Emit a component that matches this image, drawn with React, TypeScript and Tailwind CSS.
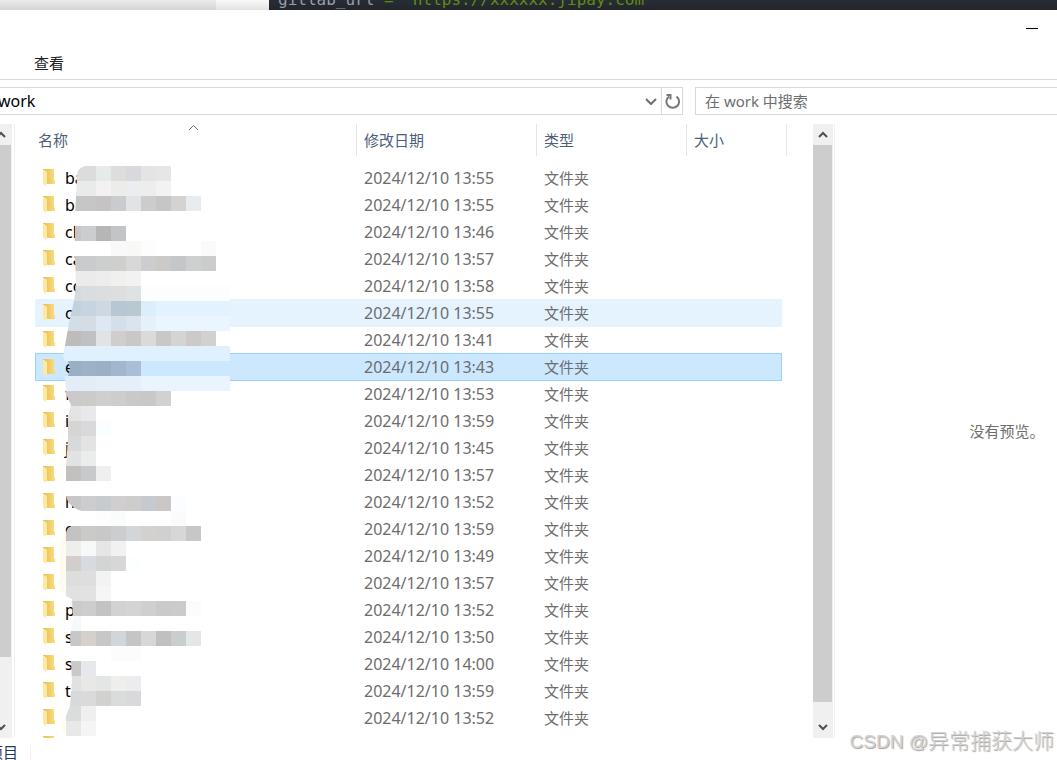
import React from 'react';
import clsx from 'clsx';

interface FolderProps {
  name: string;
  time: string;
  state?: 'hover' | 'selected';
}

const folders: FolderProps[] = [
  { name: 'ba', time: '13:55' },
  { name: 'br', time: '13:55' },
  { name: 'cl', time: '13:46' },
  { name: 'ca', time: '13:57' },
  { name: 'co', time: '13:58' },
  { name: 'c', time: '13:55', state: 'hover' },
  { name: '', time: '13:41' },
  { name: 'e', time: '13:43', state: 'selected' },
  { name: 'f', time: '13:53' },
  { name: 'i', time: '13:59' },
  { name: 'j', time: '13:45' },
  { name: '', time: '13:57' },
  { name: 'h', time: '13:52' },
  { name: 'o', time: '13:59' },
  { name: '', time: '13:49' },
  { name: '', time: '13:57' },
  { name: 'p', time: '13:52' },
  { name: 's', time: '13:50' },
  { name: 's', time: '14:00' },
  { name: 't', time: '13:59' },
  { name: '', time: '13:52' },
];

// One entry per 15px line, one colour per 15px cell, '-' leaves the cell empty
const mosaic = [
  'dcdcdc dcdcdc e7eaea dedddb d7d9dc e4e4e2 e6e6e6',
  'e9ebea e9ebea f2f2f2 ececeb ebedf0 ededed f2f2f2',
  'c6c5c5 c7c6c7 c5c3c4 cacbce e2e3e4 cccccc c7c6c7 d4d3d2 e9ecee',
  '',
  'c6c7c9 cbcdcf b6b6b6 c2c5c6',
  '- - - faf9f9 f8f8f7 fdfdfd - - - fafafa',
  'cbcaca c9cbcd cdcfce cfcfcd d8d8d9 cdcdcf cccac9 c5c6ca cecfd1 cccccc',
  'ebebeb ebebeb ededed f0f0ee f2f2f2',
  'd6dbdf d8dde0 dcdddf dededf dfe2e2 fcfdff fcfdff fcfdff fcfdff fcfdff fcfdff',
  'c4d0dc c8d3e0 ced8e0 b8c7d3 bac8d1 dcedfb e3f2ff e3f2ff e3f2ff e3f2ff e3f2ff',
  'd3dde7 d4dde6 dde8f2 d4dfe9 dbe4ed e6f0fa eaf5ff eaf5ff eaf5ff eaf5ff eaf5ff',
  'bebbba c0c1c5 e0e4e4 d0cdcb cac7c7 dadada c8c8c9 d3d5d5 cdc9c8 d1d1d1 ffffff',
  'dff0ff dff0ff dff0ff dff0ff dff0ff dff0ff dff0ff dff0ff dff0ff dff0ff dff0ff',
  '9aafc4 9db2c7 9bb0c5 a2b7cd a9bfd8',
  'e2edf8 e2edf8 e4effa e4effa e4effa e9f4ff e9f4ff e9f4ff e9f4ff e9f4ff e9f4ff',
  'cacaca cbcbca cfcfce cdcdcc c9c9c9 c8c8c8 d1d1d1',
  'e5e4e3 e8e9ea',
  'd6d5d3 d9d9db fafeff',
  'd8d9da e3e3e3',
  'e1e3e3 eaedec',
  'c2c1c0 c8c9cb efefef',
  '',
  'c8c7c6 cdcdcf c6cbcf d1cecf cdcdcb c6cace cac7c6 fbfdff',
  '- - fdfdfd f9fcfb - - - fbfbfb',
  'c3c3c4 cbcac6 c8c8c9 cccdd0 d3d6d9 d3d0ce d0d0d0 d5d8d6 c7c7ca',
  'eeeeed f6f9f8 e7e6e6 f1f1f1',
  'd2cecc d7dadf d2d5d3 d8d7d5 fcfeff',
  'dddddc dededf f3f3f3',
  'e1e1e1 e2e2e2 f6f6f6',
  'cacaca cdcdcb c3c3c3 d2d2d2 d4d4d2 cfcfcf cacaca cbcbcb fafcfd',
  'f7f8f9',
  'c7c7c9 d4d0ca c9c7c5 d1d6d9 c5c5c5 d7d7d5 c0c0c0 c9cdd0 e4e7e6',
  '- - - fcfcfc fcfcfc',
  'cbc9c8 e6e8eb',
  'e0e2e1 e8e8e8 e3e6e4 eeeeec ececee',
  'd8d9d9 dadada d1d1d0 dadcdb d9d9db',
  'dbdcde efefef',
  'e8e8e8 f5f5f5',
];

const Mosaic = () => (
  <svg
    className="pointer-events-none absolute left-[45px] top-[42px]"
    width="180"
    height="570"
    shapeRendering="crispEdges"
    aria-hidden="true"
  >
    <defs>
      <clipPath id="brush">
        <path d="M25 0Q17 2 17 10L16 30 15 60 15 92 16 120 14 135 9 157 6 174 3 190 5 195H8L10 203 8 210H5L6 228 11 239 8 250 8 272 6 300 6 330Q8 341 22 345L16 358Q6 361 6 368V430L12 433 13 452 10 470 11 495 12 515 10 540 6 550V570H170V0Z" />
      </clipPath>
    </defs>
    <path d="M4 368Q-4 385-4 410L0 424 6 428V364Z" fill="#fffbee" />
    <path d="M6 548Q1 556 2 562L6 570Z" fill="#fffbee" />
    <g clipPath="url(#brush)">
      {mosaic.map((line, row) =>
        line
          .split(' ')
          .map((color, col) =>
            color.length === 6 ? (
              <rect
                key={`${row}-${col}`}
                x={col === 0 ? 0 : 6 + col * 15}
                y={row * 15}
                width={col === 0 ? 21 : 15}
                height="15"
                fill={`#${color}`}
              />
            ) : null
          )
      )}
    </g>
  </svg>
);

const FolderIcon = () => (
  <svg width="12" height="17" viewBox="0 0 12 17" className="shrink-0" aria-hidden="true">
    <defs>
      <linearGradient id="folderBack" x1="0" y1="0" x2="1" y2="0">
        <stop offset="0.2" stopColor="#e8c260" />
        <stop offset="0.9" stopColor="#fada78" />
      </linearGradient>
    </defs>
    <path d="M0 0H11V11L12 12V15H3L0 12Z" fill="url(#folderBack)" />
    <path d="M0 0.5L3.5 2.5Q4 3 4 4V15H3V17L0 14.5Z" fill="#ffe8a2" />
  </svg>
);

const Chevron = ({ down }: { down?: boolean }) => (
  <svg width="10" height="8" viewBox="0 0 10 8" fill="none" aria-hidden="true">
    <path
      d={down ? 'M1 1L5 5 9 1' : 'M1 6L5 2 9 6'}
      stroke="#505050"
      strokeWidth="2"
    />
  </svg>
);

const RightScrollbar = () => (
  <div className="flex w-5 shrink-0 flex-col bg-[#f0f0f0]">
    <button
      type="button"
      aria-label="向上滚动"
      className="flex h-[21px] items-center justify-center pr-px"
    >
      <Chevron />
    </button>
    <div className="mr-px flex-1 bg-[#cdcdcd]" />
    <div className="h-[15px]" />
    <button
      type="button"
      aria-label="向下滚动"
      className="flex h-[21px] items-center justify-center pr-px"
    >
      <Chevron down />
    </button>
  </div>
);

const LeftScrollbar = () => (
  <div className="flex w-3 shrink-0 flex-col overflow-hidden bg-[#f0f0f0]">
    <button type="button" aria-label="导航向上滚动" className="flex h-[21px] items-center">
      <span className="-ml-1">
        <Chevron />
      </span>
    </button>
    <div className="mr-px flex-1 bg-[#cdcdcd]" />
    <div className="h-[60px]" />
    <button type="button" aria-label="导航向下滚动" className="flex h-[21px] items-center">
      <span className="-ml-1">
        <Chevron down />
      </span>
    </button>
  </div>
);

const cellStyles = {
  none: '',
  hover: 'bg-[#e5f3ff] shadow-[0_1px_0_#e5f3ff]',
  selected: 'bg-[#cce8ff] border-t border-[#99d1ff] shadow-[0_1px_0_#99d1ff]',
};

const FolderRow = ({ name, time, state }: FolderProps) => {
  const cell = clsx('p-0', cellStyles[state ?? 'none']);
  const selected = state === 'selected';

  return (
    <tr className="h-[27px]">
      <td className={clsx(cell, selected && 'border-l')}>
        <div className={clsx('flex h-[25px] items-center gap-[10px]', selected ? 'pl-[7px]' : 'pl-2')}>
          <FolderIcon />
          <span className="text-[16px] text-black">{name}</span>
        </div>
      </td>
      <td className={clsx(cell, 'pl-2 text-[16px]')}>2024/12/10 {time}</td>
      <td className={clsx(cell, 'pl-2')}>文件夹</td>
      <td className={clsx(cell, selected && 'border-r')} />
    </tr>
  );
};

const FileList = () => (
  <div className="relative ml-0.5 w-[799px] shrink-0 overflow-hidden border-l border-[#f0f0f0] pl-5">
    <table className="w-[752px] table-fixed border-separate border-spacing-0 text-left text-[15px] leading-5 text-[#6d6d6d]">
      <colgroup>
        <col className="w-[321px]" />
        <col className="w-[180px]" />
        <col className="w-[150px]" />
        <col className="w-[96px]" />
        <col className="w-[5px]" />
      </colgroup>
      <thead className="text-[#4c607a]">
        <tr className="h-8">
          <th className="relative p-0 pl-[3px] font-normal">
            名称
            <svg
              className="absolute left-[153px] top-0"
              width="11"
              height="7"
              viewBox="0 0 11 7"
              fill="none"
              aria-hidden="true"
            >
              <path d="M1 6L5.5 1.5 10 6" stroke="#6d6d6d" />
            </svg>
          </th>
          <th className="border-l border-[#e5e5e5] p-0 pl-[7px] font-normal">修改日期</th>
          <th className="border-l border-[#e5e5e5] p-0 pl-[7px] font-normal">类型</th>
          <th className="border-l border-[#e5e5e5] p-0 pl-[7px] font-normal">大小</th>
          <td className="border-r border-[#e5e5e5] p-0" />
        </tr>
      </thead>
      <tbody>
        <tr className="h-2" aria-hidden="true">
          <td className="p-0" />
        </tr>
        {folders.map((folder, index) => (
          <FolderRow key={index} {...folder} />
        ))}
      </tbody>
    </table>
    <div className="pl-2 pt-[5px]">
      <FolderIcon />
    </div>
    <Mosaic />
  </div>
);

const AddressBar = () => (
  <div className="flex h-11 shrink-0 items-start gap-3 pt-[7px]">
    <div className="-ml-1 flex h-7 w-[687px] border border-[#d9d9d9]">
      <input
        aria-label="地址"
        defaultValue="work"
        className="min-w-0 flex-1 pl-px text-[16px] text-black outline-none"
      />
      <button type="button" aria-label="上一个位置" className="flex w-5 items-center justify-center">
        <svg width="12" height="8" viewBox="0 0 12 8" fill="none" aria-hidden="true">
          <path d="M1 2L6 7 11 2" stroke="#6e6e6e" strokeWidth="2" />
        </svg>
      </button>
      <button
        type="button"
        aria-label="刷新"
        className="flex w-[21px] items-center justify-center border-l border-[#d9d9d9]"
      >
        <svg width="16" height="16" viewBox="0 0 16 16" fill="none" stroke="#787878" aria-hidden="true">
          <path d="M12.5 3.5A6.3 6.3 0 1 1 5 3.5" strokeWidth="2" />
          <path d="M2.5 2H6.5V6.5" strokeWidth="2" />
        </svg>
      </button>
    </div>
    <input
      aria-label="搜索"
      placeholder="在 work 中搜索"
      className="h-7 min-w-0 flex-1 border border-r-0 border-[#d9d9d9] pl-[9px] text-[15px] outline-none placeholder:text-[#6d6d6d]"
    />
  </div>
);

const App = () => {
  return (
    <div className="relative flex h-screen w-full flex-col overflow-hidden bg-white font-['Noto_Sans','Noto_Sans_CJK_SC',sans-serif] text-[15px]">
      <div className="flex h-[10px] shrink-0 overflow-hidden">
        <div className="w-[216px] bg-linear-to-b from-[#ececec] to-[#d4d4d4]" />
        <div className="w-[53px] bg-linear-to-b from-[#fafafa] to-[#e2e2e2]" />
        <div className="flex flex-1 items-end overflow-hidden bg-linear-to-b from-[#282c34] to-[#22262b] pl-[9px]">
          <code className="whitespace-pre font-['DejaVu_Sans_Mono',monospace] text-[16px] leading-5 text-[#979eab]">
            gitlab_url <span className="text-[#5f8c12]">= "https://xxxxxx.jipay.com"</span>
          </code>
        </div>
      </div>
      <div className="flex h-9 shrink-0 items-center justify-end pr-[19px]">
        <button type="button" aria-label="最小化" className="flex h-5 w-3 items-center">
          <span className="h-px w-full bg-black" />
        </button>
      </div>
      <div className="flex h-[34px] shrink-0 items-center border-b border-[#d9d9d9] pl-[34px] pt-0.5">
        <button type="button" className="text-[#222222]">
          查看
        </button>
      </div>
      <AddressBar />
      <div className="flex min-h-0 flex-1">
        <LeftScrollbar />
        <FileList />
        <RightScrollbar />
        <div className="ml-px flex flex-1 items-center justify-center border-l border-[#f0f0f0] pl-[122px] text-[#6d6d6d]">
          没有预览。
        </div>
      </div>
      <div className="flex h-[22px] shrink-0 items-end leading-4 text-[#1e395b]">
        <span className="-ml-3 w-[42px]">项目</span>
        <span className="h-[14px] border-l border-[#f0f0f0]" />
      </div>
      <span className="absolute bottom-1 right-[3px] font-['Liberation_Sans','Noto_Sans_CJK_SC',sans-serif] text-[21px] font-light leading-7 text-[#d2d2d2] [text-shadow:1px_1px_1px_#a0a0a0]">
        <span className="text-[19px]">CSDN @</span>异常捕获大师
      </span>
    </div>
  );
};

export default App;
